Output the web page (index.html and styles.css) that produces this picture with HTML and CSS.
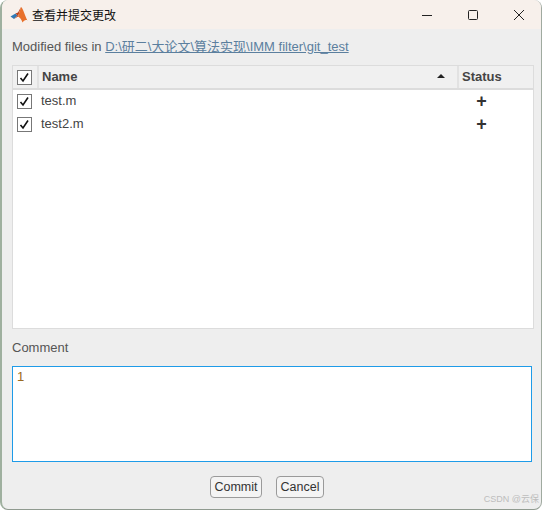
FILE: index.html
```html
<!DOCTYPE html>
<html lang="en">
<head>
  <meta charset="UTF-8">
  <title>查看并提交更改</title>
  <link rel="stylesheet" href="styles.css">
</head>
<body>
<div class="window">
  <div class="titlebar">
    <svg class="logo" width="18" height="18" viewBox="0 0 18 18">
      <path d="M0.5 10.5 L5.5 7.5 L7.5 9.5 L4 13 Z" fill="#2f79b5"/>
      <path d="M5.5 7.5 L8 6.5 L11 1 L8 10.5 L4 13 L7.5 9.5 Z" fill="#b8401e"/>
      <path d="M11 1 C12.5 1 15 10 17.5 14.5 C15.5 13.5 14 14.5 12.5 16.5 C11.5 13.5 10 11.5 8 10.5 Z" fill="#e8702a"/>
    </svg>
    <span class="title">查看并提交更改</span>
    <div class="controls">
      <svg width="12" height="12" viewBox="0 0 12 12"><path d="M1 6.5H11" stroke="#222" stroke-width="1" fill="none"/></svg>
      <svg width="12" height="12" viewBox="0 0 12 12"><rect x="1.5" y="1.5" width="9" height="9" rx="1" stroke="#222" stroke-width="1" fill="none"/></svg>
      <svg width="12" height="12" viewBox="0 0 12 12"><path d="M1 1L11 11M11 1L1 11" stroke="#222" stroke-width="1" fill="none"/></svg>
    </div>
  </div>
  <div class="content">
    <div class="path">Modified files in <a href="#">D:\研二\大论文\算法实现\IMM filter\git_test</a></div>
    <div class="table">
      <div class="head">
        <div class="cell-check">
          <span class="check"><svg width="13" height="13" viewBox="0 0 13 13"><path d="M2.5 7L5 10L10 2.5" stroke="#111" stroke-width="1.6" fill="none"/></svg></span>
        </div>
        <div class="cell-name">Name<span class="sort"></span></div>
        <div class="cell-status">Status</div>
      </div>
      <div class="row">
        <div class="cell-check">
          <span class="check"><svg width="13" height="13" viewBox="0 0 13 13"><path d="M2.5 7L5 10L10 2.5" stroke="#111" stroke-width="1.6" fill="none"/></svg></span>
        </div>
        <div class="cell-name">test.m</div>
        <div class="cell-status plus">+</div>
      </div>
      <div class="row">
        <div class="cell-check">
          <span class="check"><svg width="13" height="13" viewBox="0 0 13 13"><path d="M2.5 7L5 10L10 2.5" stroke="#111" stroke-width="1.6" fill="none"/></svg></span>
        </div>
        <div class="cell-name">test2.m</div>
        <div class="cell-status plus">+</div>
      </div>
    </div>
    <div class="label">Comment</div>
    <div class="comment">1</div>
    <div class="buttons">
      <button class="commit">Commit</button>
      <button class="cancel">Cancel</button>
    </div>
  </div>
  <div class="watermark">CSDN @云保</div>
</div>
</body>
</html>
```

FILE: styles.css
```css
html, body {
  margin: 0;
  height: 510px;
  overflow: hidden;
  background: #ffffff;
}
body {
  font-family: "Liberation Sans", "Noto Sans CJK SC", sans-serif;
  font-size: 13px;
  color: #444;
}
.window {
  position: relative;
  box-sizing: border-box;
  width: 542px;
  height: 510px;
  border-left: 2px solid #9fb09f;
  border-bottom: 1px solid #8f9a8f;
  border-right: 1px solid #a0aaa0;
  border-radius: 8px;
  background: #eeeeee;
  overflow: hidden;
}
.titlebar {
  display: flex;
  align-items: center;
  height: 29px;
  padding-left: 8px;
  background: #f7f0eb;
}
.logo { margin-right: 4px; }
.title {
  font-size: 12px;
  color: #111;
}
.controls {
  display: flex;
  gap: 34px;
  margin-left: auto;
  margin-right: 16px;
}
.content { padding: 0 6px 0 10px; }
.path {
  height: 36px;
  line-height: 36px;
  color: #555;
}
.path a { color: #5b7f9e; }
.table {
  box-sizing: border-box;
  width: 522px;
  height: 264px;
  background: #fff;
  border: 1px solid #dcdcdc;
}
.head, .row { display: flex; align-items: center; }
.head {
  height: 22px;
  background: #f0f0f0;
  border-bottom: 2px solid #dcdcdc;
  font-weight: bold;
}
.row { height: 23px; }
.cell-check {
  box-sizing: border-box;
  display: flex;
  justify-content: center;
  align-items: center;
  width: 26px;
  height: 100%;
}
.row .cell-check { padding-right: 3px; }
.head .cell-check { border-right: 2px solid #e2e2e2; padding-right: 2px; }
.cell-name {
  display: flex;
  align-items: center;
  flex: 1;
  height: 100%;
  padding: 0 0 2px 3px;
  box-sizing: border-box;
}
.row .cell-name { padding: 0 0 2px 2px; }
.sort {
  width: 0;
  height: 0;
  margin-left: auto;
  margin-right: 12px;
  border-left: 4px solid transparent;
  border-right: 4px solid transparent;
  border-bottom: 4px solid #222;
}
.cell-status {
  box-sizing: border-box;
  display: flex;
  align-items: center;
  width: 76px;
  height: 100%;
  padding: 0 0 2px 3px;
}
.head .cell-status { border-left: 2px solid #e2e2e2; }
.plus {
  justify-content: center;
  padding: 0 27px 1px 0;
  font-size: 18px;
  font-weight: bold;
  color: #333;
}
.check {
  box-sizing: border-box;
  display: flex;
  width: 15px;
  height: 15px;
  background: #fff;
  border: 1px solid #777;
}
.label {
  height: 37px;
  line-height: 37px;
  color: #555;
}
.comment {
  box-sizing: border-box;
  width: 520px;
  height: 96px;
  padding: 2px 4px;
  background: #fff;
  border: 1px solid #1e9be8;
  color: #9a6a20;
}
.buttons {
  display: flex;
  gap: 14px;
  justify-content: center;
  margin-top: 14px;
  padding-right: 13px;
}
button {
  height: 22px;
  padding: 0;
  background: #f4f4f4;
  border: 1px solid #9a9a9a;
  border-radius: 4px;
  font-family: inherit;
  font-size: 12.5px;
  color: #333;
}
.commit { width: 52px; }
.cancel { width: 48px; }
.watermark {
  position: absolute;
  right: 2px;
  bottom: 4px;
  font-size: 9px;
  color: #bdbdbd;
}
```
